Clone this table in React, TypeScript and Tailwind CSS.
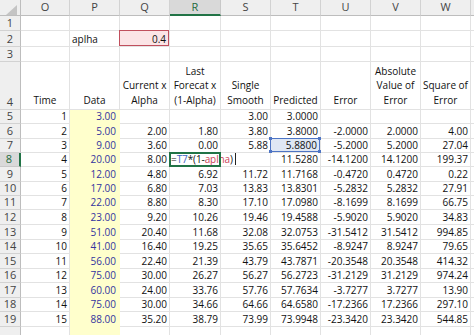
import React from "react";

const LETTERS = ["O", "P", "Q", "R", "S", "T", "U", "V", "W", ""];

const DATA: string[][] = [
  ["1", "3.00", "", "", "3.00", "3.0000", "", "", ""],
  ["2", "5.00", "2.00", "1.80", "3.80", "3.8000", "-2.0000", "2.0000", "4.00"],
  ["3", "9.00", "3.60", "0.00", "5.88", "5.8800", "-5.2000", "5.2000", "27.04"],
  ["4", "20.00", "8.00", "", "", "11.5280", "-14.1200", "14.1200", "199.37"],
  ["5", "12.00", "4.80", "6.92", "11.72", "11.7168", "-0.4720", "0.4720", "0.22"],
  ["6", "17.00", "6.80", "7.03", "13.83", "13.8301", "-5.2832", "5.2832", "27.91"],
  ["7", "22.00", "8.80", "8.30", "17.10", "17.0980", "-8.1699", "8.1699", "66.75"],
  ["8", "23.00", "9.20", "10.26", "19.46", "19.4588", "-5.9020", "5.9020", "34.83"],
  ["9", "51.00", "20.40", "11.68", "32.08", "32.0753", "-31.5412", "31.5412", "994.85"],
  ["10", "41.00", "16.40", "19.25", "35.65", "35.6452", "-8.9247", "8.9247", "79.65"],
  ["11", "56.00", "22.40", "21.39", "43.79", "43.7871", "-20.3548", "20.3548", "414.32"],
  ["12", "75.00", "30.00", "26.27", "56.27", "56.2723", "-31.2129", "31.2129", "974.24"],
  ["13", "60.00", "24.00", "33.76", "57.76", "57.7634", "-3.7277", "3.7277", "13.90"],
  ["14", "75.00", "30.00", "34.66", "64.66", "64.6580", "-17.2366", "17.2366", "297.10"],
  ["15", "88.00", "35.20", "38.79", "73.99", "73.9948", "-23.3420", "23.3420", "544.85"],
];

const HEAD4: React.ReactNode[] = [
  "Time",
  "Data",
  <>Current x<br />Alpha</>,
  <>Last<br />Forecat x<br />(1-Alpha)</>,
  <>Single<br />Smooth</>,
  "Predicted",
  "Error",
  <>Absolute<br />Value of<br />Error</>,
  <>Square of<br />Error</>,
  "",
];

const NROWS = 20; // excel rows 1..20

function Corner() {
  return (
    <div className="bg-[#efefef] border-r border-b border-[#bdbdbd] relative">
      <svg className="absolute left-[6px] top-[5px]" width="11" height="10" viewBox="0 0 11 10">
        <polygon points="11,0 11,10 0,10" fill="#c4c4c4" />
      </svg>
    </div>
  );
}

function ColHeader({ letter }: { letter: string }) {
  if (letter === "R") {
    return (
      <div className="bg-[#d9d9d9] border-r border-[#c8c8c8] border-b-2 border-b-[#217346] flex items-center justify-center text-[#1e6b40] text-[11px]">
        {letter}
      </div>
    );
  }
  return (
    <div className="bg-[#efefef] border-r border-[#d2d2d2] border-b border-b-[#bdbdbd] flex items-center justify-center text-[#444] text-[11px]">
      {letter}
    </div>
  );
}

function RowHeader({ n }: { n: number }) {
  if (n === 8) {
    return (
      <div className="bg-[#d9d9d9] border-b border-[#c8c8c8] border-r-2 border-r-[#217346] flex items-end justify-center pr-[1px] text-[#1e6b40] text-[11px] leading-[14px]">
        {n}
      </div>
    );
  }
  return (
    <div className="bg-[#efefef] border-b border-[#d2d2d2] border-r border-r-[#bdbdbd] flex items-end justify-center text-[#444] text-[11px] leading-[14px]">
      {n <= 19 ? n : ""}
    </div>
  );
}

function Formula() {
  return (
    <div className="relative z-20 border-r border-b border-[#e2e2e2] flex items-end pl-[1px] leading-[14px] whitespace-nowrap overflow-visible">
      <span className="text-[#111] shrink-0 tracking-[-0.1px]">
        =<span className="text-[#3d63c2]">T7</span>*(1-<span className="text-[#cc4357]">aplha</span>)
      </span>
      <span className="inline-block shrink-0 w-px h-[12px] bg-[#222] ml-[2px] mb-[1px]" />
      <div className="absolute -left-px -top-px right-[-1px] bottom-[-1px] border-2 border-[#217346] pointer-events-none" />
    </div>
  );
}

function Cell({ row, col }: { row: number; col: number }) {
  const base = "border-r border-b border-[#e2e2e2] flex items-end leading-[14px] whitespace-nowrap text-[#111]";
  if (row === 2 && col === 2) {
    return <div className={`${base} justify-start pl-[2px]`}>aplha</div>;
  }
  if (row === 2 && col === 3) {
    return (
      <div className={`${base} relative z-10 justify-end pr-[3px] bg-[#fbe4e6]`}>
        0.4
        <div className="absolute -left-px -top-px right-0 bottom-0 border border-[#c04f5d] pointer-events-none" />
      </div>
    );
  }
  if (row === 4) {
    return (
      <div className="border-r border-b border-[#e2e2e2] flex flex-col justify-end items-center text-center leading-[14.5px] pb-[2px] whitespace-nowrap text-[#111]">
        <div>{HEAD4[col - 1]}</div>
      </div>
    );
  }
  const isYellow = col === 2 && row >= 5;
  if (row >= 5 && row <= 19) {
    if (row === 8 && col === 4) return <Formula />;
    const v = DATA[row - 5][col - 1] ?? "";
    if (isYellow) {
      return (
        <div className="bg-[#ffffcc] border-r border-b border-[#ffffcc] flex items-end justify-end pr-[3px] leading-[14px] text-[#33339e] whitespace-nowrap">
          {v}
        </div>
      );
    }
    if (row === 7 && col === 6) {
      return (
        <div className={`${base} relative z-10 justify-end pr-[3px] bg-[#dfe7f4]`}>
          {v}
          <div className="absolute -left-px -top-px right-0 bottom-0 border border-[#4d74c4] pointer-events-none" />
          <div className="absolute -left-[2px] -top-[2px] w-[3px] h-[3px] bg-[#4d74c4]" />
          <div className="absolute -right-[1px] -top-[2px] w-[3px] h-[3px] bg-[#4d74c4]" />
          <div className="absolute -left-[2px] -bottom-[1px] w-[3px] h-[3px] bg-[#4d74c4]" />
          <div className="absolute -right-[1px] -bottom-[1px] w-[3px] h-[3px] bg-[#4d74c4]" />
        </div>
      );
    }
    return <div className={`${base} justify-end pr-[2px]`}>{v}</div>;
  }
  if (isYellow) {
    return <div className="bg-[#ffffcc] border-r border-b border-[#ffffcc]" />;
  }
  return <div className={base} />;
}

export default function App() {
  const rows: React.ReactNode[] = [];
  rows.push(<Corner key="c" />);
  LETTERS.forEach((l, i) => rows.push(<ColHeader key={"h" + i} letter={l} />));
  for (let r = 1; r <= NROWS; r++) {
    rows.push(<RowHeader key={"r" + r} n={r} />);
    for (let c = 1; c <= LETTERS.length; c++) {
      rows.push(<Cell key={r + "-" + c} row={r} col={c} />);
    }
  }
  return (
    <div
      className="w-[474px] h-[335px] overflow-hidden bg-white text-[10px]"
      style={{ fontFamily: '"Open Sans", "Noto Sans", sans-serif' }}
    >
      <div className="grid grid-cols-[21px_49px_50px_50px_51px_50px_50px_50px_50px_50px_40px] grid-rows-[16px_15px_16px_15px_48px_14px_15px_14px_14px_15px_14px_14px_15px_15px_14px_15px_14px_15px_14px_15px_15px]">
        {rows}
      </div>
    </div>
  );
}
